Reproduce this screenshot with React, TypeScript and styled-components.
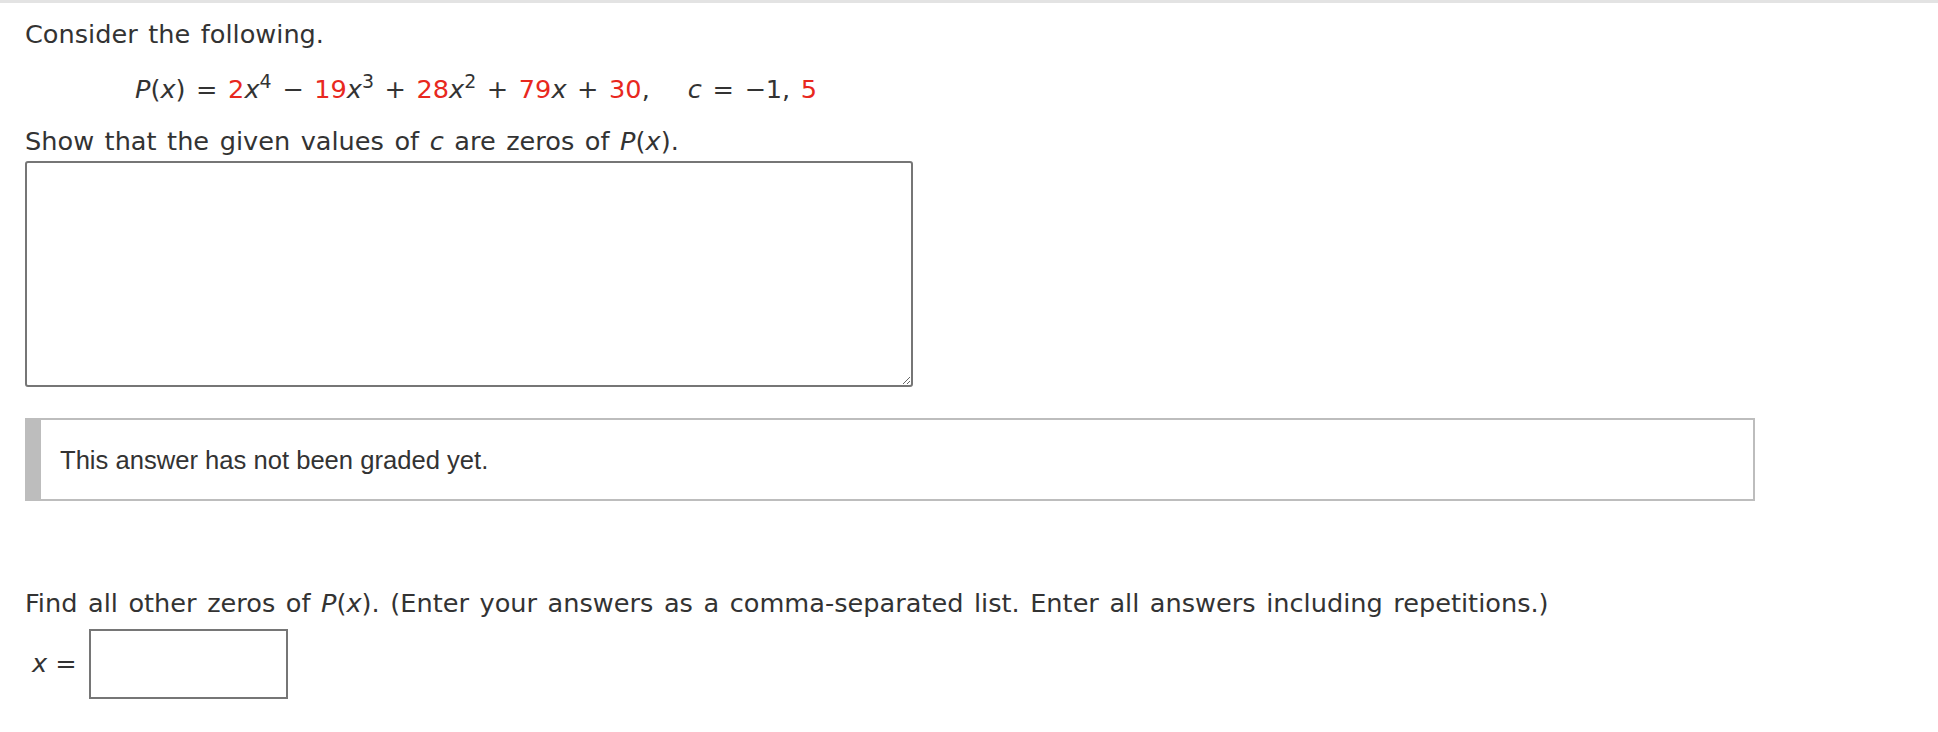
import React from "react";
import styled, { createGlobalStyle } from "styled-components";

const Global = createGlobalStyle`
  html, body { margin: 0; padding: 0; background: #fff; }
  body { font-family: "DejaVu Sans", Verdana, sans-serif; color: #333; }
`;

const Page = styled.div`
  border-top: 3px solid #e3e3e3;
  padding: 12px 25px 30px 25px;
  font-size: 25.6px;
  line-height: 38.4px;
  word-spacing: 2.4px;
`;

const Para = styled.p<{ $mt?: number }>`
  margin: ${(p) => p.$mt ?? 0}px 0 0 0;
  white-space: nowrap;
`;

const Formula = styled.div`
  margin: 17px 0 0 0;
  padding-left: 110px;
  white-space: pre;
`;

const V = styled.i`
  font-style: italic;
`;

const Red = styled.span`
  color: #e8281e;
`;

const Sup = styled.sup`
  font-size: 0.74em;
  line-height: 0;
  vertical-align: 0.55em;
`;

const CGroup = styled.span`
  margin-left: 38px;
`;

const WorkBox = styled.textarea`
  display: block;
  box-sizing: border-box;
  width: 888px;
  height: 226px;
  margin-top: 1px;
  border: 2px solid #767676;
  border-radius: 3px;
  background: #fff;
  resize: both;
  font-family: "DejaVu Sans", sans-serif;
  font-size: 20px;
  padding: 6px;
`;

const Grader = styled.div`
  box-sizing: border-box;
  display: flex;
  align-items: center;
  width: 1730px;
  height: 83px;
  margin-top: 31px;
  border: 2px solid #bdbdbd;
  border-left: 16px solid #bdbdbd;
  padding-left: 19px;
  font-family: "Liberation Sans", Arial, Helvetica, sans-serif;
  font-size: 25.6px;
  word-spacing: 0;
  color: #333;
`;

const AnswerRow = styled.div`
  display: flex;
  align-items: center;
  margin-top: 6px;
  padding-left: 7px;
`;

const Label = styled.span`
  margin-right: 12px;
  white-space: pre;
  word-spacing: 0;
`;

const AnswerInput = styled.input`
  box-sizing: border-box;
  width: 199px;
  height: 70px;
  border: 2px solid #767676;
  border-radius: 0;
  background: #fff;
  font-family: "DejaVu Sans", sans-serif;
  font-size: 22px;
  padding: 4px 8px;
`;

export default function App() {
  return (
    <>
      <Global />
      <Page>
        <Para>Consider the following.</Para>
        <Formula>
          <V>P</V>(<V>x</V>) = <Red>2</Red>
          <V>x</V>
          <Sup>4</Sup> − <Red>19</Red>
          <V>x</V>
          <Sup>3</Sup> + <Red>28</Red>
          <V>x</V>
          <Sup>2</Sup> + <Red>79</Red>
          <V>x</V> + <Red>30</Red>,
          <CGroup>
            <V>c</V> = −1, <Red>5</Red>
          </CGroup>
        </Formula>
        <Para $mt={13}>
          Show that the given values of <V>c</V> are zeros of <V>P</V>(<V>x</V>).
        </Para>
        <WorkBox />
        <Grader>This answer has not been graded yet.</Grader>
        <Para $mt={83}>
          Find all other zeros of <V>P</V>(<V>x</V>). (Enter your answers as a
          comma-separated list. Enter all answers including repetitions.)
        </Para>
        <AnswerRow>
          <Label>
            <V>x</V> =
          </Label>
          <AnswerInput type="text" />
        </AnswerRow>
      </Page>
    </>
  );
}
